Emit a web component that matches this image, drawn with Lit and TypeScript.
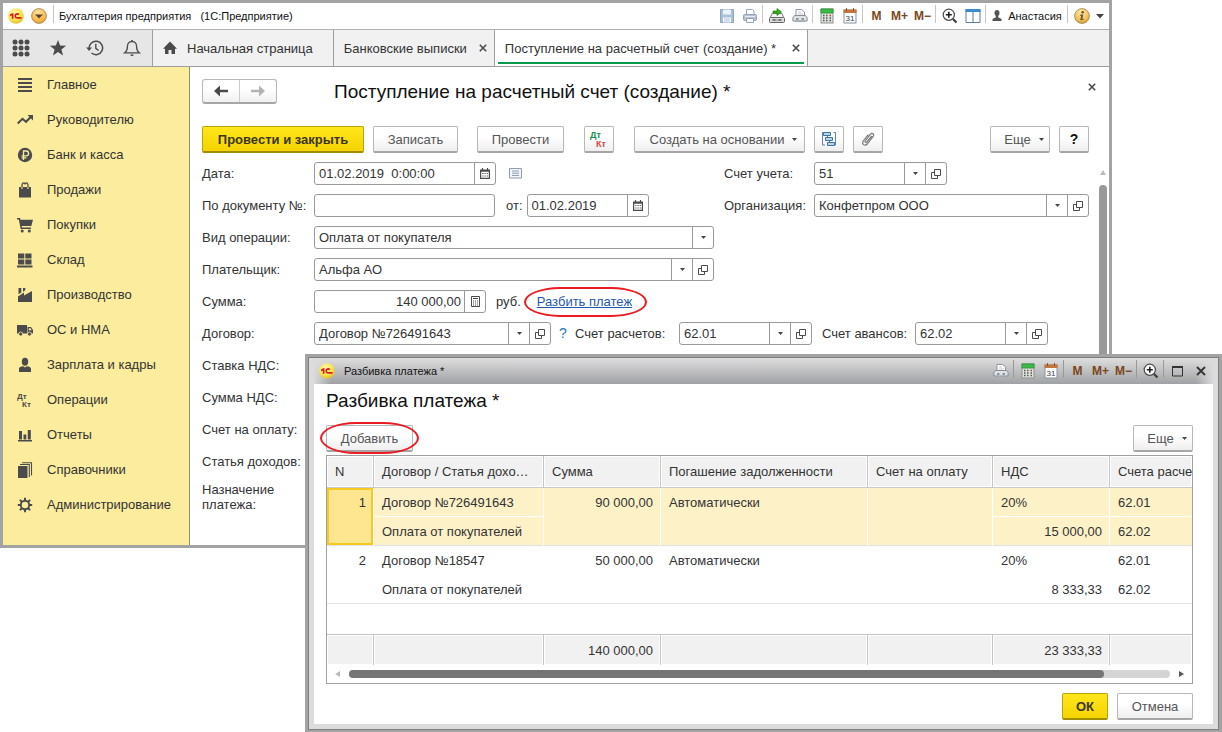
import { LitElement, html, css, svg, TemplateResult } from "lit";
import { customElement, state } from "lit/decorators.js";
import { classMap } from "lit/directives/class-map.js";

/* ---------- icons ---------- */

const icon = (w: number, h: number, body: unknown) => html`<svg
  class="icon"
  width=${w}
  height=${h}
  viewBox="0 0 ${w} ${h}"
  aria-hidden="true"
>${body}</svg>`;

const G = "#4b4b4b";

const icons = {
  logo: icon(16, 16, svg`
    <defs><radialGradient id="lg" cx="40%" cy="30%" r="75%"><stop offset="0" stop-color="#fff8a8"/><stop offset="0.6" stop-color="#fbe34f"/><stop offset="1" stop-color="#dcb82e"/></radialGradient></defs>
    <circle cx="8" cy="8" r="7.8" fill="url(#lg)"/>
    <path d="M2 6.600 4 5.200h1.500v5.600H3.800V7.400L2 8.200z" fill="#d8201c"/>
    <path d="M10.800 6.700A2 2 0 1 0 9 9.900h4.600" fill="none" stroke="#d8201c" stroke-width="1.700"/>`),
  menuBall: icon(16, 16, svg`
    <defs><radialGradient id="mb" cx="45%" cy="25%" r="80%"><stop offset="0" stop-color="#ffe3a0"/><stop offset="0.7" stop-color="#f7b548"/><stop offset="1" stop-color="#e39a2c"/></radialGradient></defs>
    <circle cx="8" cy="8" r="7.4" fill="url(#mb)" stroke="#a98750" stroke-width=".9"/>
    <path d="M4 6.500h8L8 10.500z" fill="#5b4526"/>`),
  save: icon(16, 16, svg`
    <path d="M1.500 1.500h13v13h-13z" fill="#a9c0dc" stroke="#8ba4c4"/>
    <path d="M4 1.500h8v5H4z" fill="#eef3f9"/><path d="M4 9.500h8v5H4z" fill="#fff"/><path d="M5 11h6M5 13h6" stroke="#a9c0dc"/>`),
  printer: icon(16, 16, svg`
    <path d="M4.500 1.500h6l1.500 1.500v4h-7.500z" fill="#fff" stroke="#98a7b8"/>
    <rect x="1.500" y="6.500" width="13" height="6" rx="1" fill="#b7c3d1" stroke="#93a2b4"/>
    <path d="M4.500 10.500h7v4h-7z" fill="#fff" stroke="#93a2b4"/><path d="M3 8.500h10" stroke="#e9eef3"/>`),
  printGo: icon(18, 16, svg`
    <path d="M2.500 9 4 5.500h10L15.500 9" fill="#f3f3f3" stroke="#7d7d7d"/>
    <rect x="1.500" y="9.500" width="15" height="5" rx="1" fill="#ddd" stroke="#666"/>
    <path d="M4.500 12h3M10.500 12h3" stroke="#555" stroke-width="1.600"/><path d="M7 12h4" stroke="#888"/>
    <path d="M5 3h4V.5L13.500 4 9 7.500V5H5z" fill="#35b21b" stroke="#1f7c10" stroke-width=".7"/>`),
  printDoc: icon(16, 16, svg`
    <path d="M4 8V1.500h5.500L12.500 4v4" fill="#fff" stroke="#8f949c"/><path d="M6 4h3M6 6h5" stroke="#c6cad0"/>
    <path d="M.9 9.500 2.500 7.500h11l1.600 2v3.500h-14.200z" fill="#dfe3e8" stroke="#878d96"/>
    <path d="M4 11h2.500M9.500 11H12" stroke="#757b84" stroke-width="1.600"/><path d="M3 13.500h10" stroke="#a2a8b0"/>`),
  calc: icon(14, 16, svg`
    <rect x="1" y="1" width="12" height="14" fill="#dfe2df" stroke="#8b918b"/>
    <path d="M1 1h12v4H1z" fill="#3fb84a" stroke="#2f9a3c"/>
    <path d="M3 7.500h1.500M6 7.500h1.500M3 10h1.500M6 10h1.500M3 12.500h1.500M6 12.500h1.500M9.500 10H11M9.500 12.500H11" stroke="#4d5a4d" stroke-width="1.500"/>
    <path d="M9.500 7.500H11" stroke="#c33" stroke-width="1.500"/>`),
  calendar: icon(14, 16, svg`
    <rect x="1" y="2" width="12" height="13" fill="#fdfdfd" stroke="#8693a3"/>
    <path d="M.5 1.500h13V5H.5z" fill="#c4763f"/><path d="M3.500 0v3M10.500 0v3" stroke="#8d5228"/>
    <text x="7" y="13" text-anchor="middle" font-size="8" font-family="Liberation Sans, Arial, sans-serif" fill="#38404a">31</text>`),
  zoom: icon(16, 16, svg`
    <circle cx="6.800" cy="6.800" r="5.600" fill="#fdfdfd" stroke="#4a4a4a" stroke-width="1.200"/>
    <path d="M3.800 6.800h6M6.800 3.800v6" stroke="#1f1f1f" stroke-width="1.600"/><path d="m11 11 3.500 3.500" stroke="#3c3c3c" stroke-width="2.200"/>`),
  panels: icon(16, 16, svg`
    <path d="M1 1.500h14v13H1z" fill="#fff" stroke="#5f7d9c"/><path d="M.5 1h15v3H.5z" fill="#3c8ad0"/><path d="M8 4v10.500" stroke="#5f7d9c"/>`),
  user: icon(10, 12, svg`<ellipse cx="5" cy="3" rx="2.500" ry="3" fill="#555"/><path d="M3.800 5h2.400v2.200L9.500 9v2h-9V9l3.300-1.800z" fill="#555"/>`),
  info: icon(16, 16, svg`
    <defs><radialGradient id="in" cx="45%" cy="25%" r="80%"><stop offset="0" stop-color="#ffe9a6"/><stop offset="0.700" stop-color="#efbd4c"/><stop offset="1" stop-color="#cf9630"/></radialGradient></defs>
    <circle cx="8" cy="8" r="7.400" fill="url(#in)" stroke="#a58a55" stroke-width=".9"/>
    <circle cx="8.600" cy="4.200" r="1.300" fill="#69503a"/><path d="M6.300 6.500h3L8.300 11l1.500-.4-.3 1.200-3.300.5 1-4.600-1.200.1z" fill="#69503a"/>`),
  caretBig: icon(8, 5, svg`<path d="M0 0h8L4 4.500z" fill="#444"/>`),
  caret: icon(5, 3, svg`<path d="M0 0h5L2.500 3z" fill="#444"/>`),
  grid: icon(18, 18, svg`${[3, 9, 15].map((y) => [3, 9, 15].map((x) => svg`<circle cx=${x} cy=${y} r="2.500" fill=${G}/>`))}`),
  star: icon(18, 18, svg`<path d="m9 1 2.100 5.500 6 .3-4.700 3.700 1.700 5.900L9 13l-5.100 3.400 1.700-5.900L.9 6.800l6-.3z" fill=${G}/>`),
  history: icon(18, 18, svg`<path d="M3.200 9.500A6.700 6.700 0 1 1 5.500 14" fill="none" stroke=${G} stroke-width="1.500"/><path d="M.2 8.500h5.800L3.100 12z" fill=${G}/><path d="M9.800 4.800V9.300l2.800 2.200" fill="none" stroke=${G} stroke-width="1.400"/>`),
  bell: icon(18, 18, svg`<path d="M1.800 13.800c2-1.500 2.600-3 2.600-6C4.400 4.500 6.500 2.700 9 2.700s4.600 1.800 4.600 5.100c0 3 .6 4.500 2.600 6z" fill="none" stroke=${G} stroke-width="1.300"/><path d="M7.300 15.500h3.400c-.2 1-.8 1.500-1.700 1.500s-1.500-.5-1.700-1.500z" fill=${G}/><path d="M8.200 1h1.600v2H8.200z" fill=${G}/>`),
  home: icon(14, 14, svg`<path d="M7 .5 0 7.800h2V13h3.500V9h3v4H12V7.800h2z" fill=${G}/>`),
  cross: icon(8, 8, svg`<path d="m.8.8 6.400 6.400M7.200.8.8 7.200" stroke=${G} stroke-width="1.600"/>`),
  crossBig: icon(10, 10, svg`<path d="m1 1 8 8M9 1 1 9" stroke="#333" stroke-width="1.800"/>`),
  maximize: icon(11, 11, svg`<path d="M.5 1h10v9H.5z" fill="none" stroke="#333"/><path d="M0 1h11" stroke="#333" stroke-width="2"/>`),
  back: icon(14, 12, svg`<path d="M0 6 6 .5V4.700h8v2.600H6v4.200z" fill=${G}/>`),
  forward: icon(14, 12, svg`<path d="M14 6 8 .5V4.700H0v2.600h8v4.200z" fill="#b3b3b3"/>`),
  structure: icon(16, 16, svg`
    <path d="M4 1.500H1.500v12.500H4M12.500 1.500h2V14H13" fill="none" stroke="#5b84a8"/>
    <path d="M2.500 1.500h7v3h-7zM4.500 6.500h7v3h-7zM6.500 11.500h7v3h-7z" fill="#b9d3e6" stroke="#3f759f"/><path d="M6.500 4.500v2M8.500 9.500v2" stroke="#3f759f"/>`),
  clip: icon(14, 16, svg`<path d="m10.800 5-5 6.200c-.8 1-2.300-.1-1.500-1.200l5.200-6.800c1.500-1.900 4.200.1 2.700 2.100L6.300 13c-2.300 2.800-6.200-.1-4-3l5-6.400" fill="none" stroke="#777" stroke-width="1.200"/>`),
  dateBox: icon(10, 11, svg`<path d="M.6 2.500h8.800v7.900H.6z" fill="none" stroke=${G} stroke-width="1.200"/><path d="M0 1.500h10v2.300H0z" fill=${G}/><path d="M2.500 0v2M7.500 0v2" stroke=${G} stroke-width="1.200"/><path d="M2.300 5.500h1.200M4.500 5.500h1.200M6.700 5.500h1.200M2.300 8h1.200M4.500 8h1.200M6.700 8h1.200" stroke=${G} stroke-width="1.200"/>`),
  calcBox: icon(9, 11, svg`<path d="M.5.5h8v10h-8z" fill="none" stroke=${G}/><path d="M2 2.500h5M2 5h1M4 5h1M6 5h1M2 7h1M4 7h1M6 7h1M2 9h1M4 9h1M6 9h1" stroke=${G}/>`),
  open: icon(10, 10, svg`<path d="M3.500.5h6v6h-6z" fill="none" stroke=${G}/><path d="M3.500 3.500h-3v6h6v-3" fill="none" stroke=${G}/>`),
  note: icon(14, 11, svg`<path d="M.5.5h12v9.500H.5z" fill="#f3f6f9" stroke="#8c9cb3"/><path d="M3 3h7M3 5.200h7M3 7.500h7" stroke="#8c9cb3"/>`),
  arrowL: icon(5, 6, svg`<path d="M5 0v6L0 3z" fill="#bbb"/>`),
  arrowR: icon(5, 6, svg`<path d="M0 0v6l5-3z" fill="#555"/>`),
  arrowU: icon(6, 5, svg`<path d="M0 5h6L3 0z" fill="#bbb"/>`),
};

const nav: { label: string; icon: TemplateResult }[] = [
  { label: "Главное", icon: icon(16, 16, svg`<path d="M1 2h14M1 6h14M1 10h14M1 14h14" stroke=${G} stroke-width="2"/>`) },
  { label: "Руководителю", icon: icon(16, 16, svg`<path d="m.7 11.500 4.800-4.700 3.500 3 4.500-4.500" fill="none" stroke=${G} stroke-width="2"/><path d="M10.500 3H16v5.500z" fill=${G}/>`) },
  { label: "Банк и касса", icon: icon(16, 16, svg`<circle cx="8" cy="8" r="7.200" fill=${G}/><path d="M6.500 13V4h2.700a2.300 2.300 0 0 1 0 4.800H4.600M4.600 10.900h4.800" fill="none" stroke="#fbec9e" stroke-width="1.300"/>`) },
  { label: "Продажи", icon: icon(16, 16, svg`<path d="M2 5h12v10.500H2z" fill=${G}/><path d="M5 7V3.500C5 .5 8 .5 8 3M8 3c0-2.500 3-2.500 3 .5V7" fill="none" stroke="#fbec9e" stroke-width="1"/><path d="M5 5V3C5.200.2 8 .2 8 2.500 8 .2 10.800.2 11 3v2" fill="none" stroke=${G} stroke-width="1.300"/>`) },
  { label: "Покупки", icon: icon(16, 16, svg`<path d="M0 1h3l.6 1.800H16L14.300 9H4.600l.4 1.500h9V12H3.700L1.800 2.500H0z" fill=${G}/><circle cx="5.200" cy="14" r="1.500" fill=${G}/><circle cx="12.300" cy="14" r="1.500" fill=${G}/>`) },
  { label: "Склад", icon: icon(16, 16, svg`<path d="M1 1.500h6.300v5H1zM8.300 1.500h6.200v5H8.300zM1 7.500h6.300v5H1zM8.300 7.500h6.200v5H8.300zM0 13.500h15.500v2H0z" fill=${G}/>`) },
  { label: "Производство", icon: icon(16, 16, svg`<path d="M1 15V9.500l6-4v3l8-4.500V15z" fill=${G}/><path d="M1.500 1h2.800v4.500L1.500 7.200zM6 1h2.500L8 3.500 6 4.700z" fill=${G}/>`) },
  { label: "ОС и НМА", icon: icon(16, 16, svg`<path d="M0 3h10v8.500H0zM10.500 5H14l2 3v3.500h-5.500z" fill=${G}/><path d="M11.800 6.200h1.700l1.200 2h-2.900z" fill="#fbec9e"/><circle cx="3.700" cy="12" r="2" fill=${G} stroke="#fbec9e" stroke-width=".8"/><circle cx="12.500" cy="12" r="2" fill=${G} stroke="#fbec9e" stroke-width=".8"/>`) },
  { label: "Зарплата и кадры", icon: icon(16, 16, svg`<ellipse cx="8" cy="4.700" rx="3.200" ry="4" fill=${G}/><path d="M2 15v-3.200C2 10 5 9.300 6.300 9.300L8 10.500l1.700-1.200c1.300 0 4.300.7 4.300 2.500V15z" fill=${G}/>`) },
  { label: "Операции", icon: icon(16, 16, svg`<g font-family="Liberation Sans, Arial, sans-serif" font-weight="700" font-size="8" fill=${G}><text x="0" y="7">Дт</text><text x="5" y="15">Кт</text></g>`) },
  { label: "Отчеты", icon: icon(16, 16, svg`<path d="M2 4h3v8.500H2zM6.500 7.500h2.800v5H6.500zM10.800 3h3v9.500h-3zM1 13h14v1.500H1z" fill=${G}/>`) },
  { label: "Справочники", icon: icon(16, 16, svg`<path d="M1 4h9.500v12H1z" fill=${G}/><path d="M3 2.500h9.300V15M5 .7h9.500v12.800" fill="none" stroke=${G} stroke-width="1.100"/>`) },
  { label: "Администрирование", icon: icon(16, 16, svg`<circle cx="8" cy="8" r="4.200" fill="none" stroke=${G} stroke-width="1.900"/>${[0, 45, 90, 135, 180, 225, 270, 315].map((a) => svg`<path d="M7 .8h2v3H7z" fill=${G} transform="rotate(${a} 8 8)"/>`)}`) },
];

/* ---------- shared styles ---------- */

const shared = css`
  * { box-sizing: border-box; }
  button, input, select {
    font: inherit;
    color: inherit;
    margin: 0;
    padding: 0;
    border: 0;
    background: none;
    border-radius: 0;
    outline-offset: -1px;
  }
  button { cursor: pointer; }
  .icon { display: block; flex: none; }
  .caption {
    display: flex;
    align-items: center;
    font-size: 11px;
    line-height: 16px;
    color: #111;
  }
  .caption .tools { display: flex; align-items: center; margin-left: auto; }
  .tool {
    width: 23px;
    height: 24px;
    display: flex;
    align-items: center;
    justify-content: center;
    white-space: nowrap;
  }
  .tool.mem { font: bold 12px/16px "Liberation Sans", Arial, sans-serif; color: #7a4620; }
  .sep { width: 1px; height: 18px; margin: 0 2px 4px 1px; background: #c6c6c6; }
  h1 { margin: 0; font-size: 19px; line-height: 24px; font-weight: 400; color: #111; }
  .btn {
    height: 27px;
    display: inline-flex;
    align-items: center;
    justify-content: center;
    gap: 8px;
    border: 1px solid #b7b7b7;
    border-bottom: 2px solid #a6a6a6;
    border-radius: 2px;
    background: linear-gradient(#fff 40%, #eee);
    color: #555;
    white-space: nowrap;
    flex: none;
  }
  .btn.primary {
    background: linear-gradient(#ffe61a, #f5d400);
    border-color: #b9a20c;
    border-bottom-color: #a18c06;
    color: #3b3520;
    font-weight: 700;
  }
  .ringed { position: relative; display: inline-flex; }
  .ring {
    position: absolute;
    border: 2px solid #ea1b22;
    border-radius: 36px / 50%;
    pointer-events: none;
  }
`;

const separator = html`<span class="sep"></span>`;
const tool = (label: string, body: unknown, mem = false) =>
  html`<button class=${classMap({ tool: true, mem })} title=${label} aria-label=${label}>${body}</button>`;

const calcTools = html`
  ${separator}
  ${tool("Калькулятор", icons.calc)} ${tool("Календарь", icons.calendar)}
  ${separator}
  ${tool("Память", "M", true)} ${tool("Прибавить к памяти", "M+", true)} ${tool("Вычесть из памяти", "M−", true)}
  ${separator}
  ${tool("Масштаб", icons.zoom)}
`;

/* ---------- split payment dialog ---------- */

interface SplitRow {
  contract: string;
  income: string;
  sum: string;
  debt: string;
  rate: string;
  vat: string;
  settlement: string;
  advance: string;
}

@customElement("split-dialog")
export class SplitDialog extends LitElement {
  @state() private selected = 0;

  private rows: SplitRow[] = [
    { contract: "Договор №726491643", income: "Оплата от покупателей", sum: "90 000,00", debt: "Автоматически", rate: "20%", vat: "15 000,00", settlement: "62.01", advance: "62.02" },
    { contract: "Договор №18547", income: "Оплата от покупателей", sum: "50 000,00", debt: "Автоматически", rate: "20%", vat: "8 333,33", settlement: "62.01", advance: "62.02" },
  ];

  static styles = [
    shared,
    css`
      :host { display: block; }
      .frame { border: 3px solid #a3a3a3; }
      .inner { border: 1px solid #7f7f7f; background: #dcdcdc; padding: 0 5px 5px; }
      .caption {
        height: 26px;
        margin: 0 -5px;
        padding: 0 6px 0 10px;
        background:
          linear-gradient(to right, #dcdcdc 4px, #dcdcdc00 22px, #dcdcdc00 calc(100% - 22px), #dcdcdc calc(100% - 4px)),
          linear-gradient(#dedede, #a0a1a4);
      }
      .caption .name { margin-left: 9px; }
      .sep { background: #98999b; }
      .body { background: #fff; padding: 5px 20px 4px 12px; }
      .commands { display: flex; justify-content: space-between; margin: 12px 0 3px; }
      .add { width: 87px; }
      .more { width: 60px; padding-left: 8px; }
      .add-ring { inset: -3px -6px -2px -6px; }
      .grid { border: 1px solid #a0a0a0; overflow: hidden; }
      table { width: 100%; table-layout: fixed; border-collapse: separate; border-spacing: 0; color: #333; }
      .c-n { width: 47px; }
      .c-contract { width: 170px; }
      .c-sum, .c-vat { width: 117px; }
      .c-debt { width: 207px; }
      .c-invoice { width: 125px; }
      th, td {
        padding: 2px 8px 0;
        height: 29px;
        font-weight: 400;
        text-align: left;
        vertical-align: top;
        line-height: 26px;
        white-space: nowrap;
        overflow: hidden;
        border: 0 solid transparent;
        border-right-width: 1px;
      }
      th:last-child, td.last { padding-right: 0; border-right-width: 0; }
      .trim { text-overflow: ellipsis; }
      thead th, tfoot td {
        line-height: 28px;
        background: #f1f1f1;
        border-right-color: #c4c4c4;
        box-shadow: inset 0 0 0 1px #fff;
      }
      thead th { height: 32px; border-bottom: 1px solid #c9c9c9; }
      tfoot td { height: 31px; border-top: 1px solid #c4c4c4; }
      .num { text-align: right; padding-right: 7px; }
      tbody td.end { border-bottom: 1px solid #e2e2e2; }
      tbody.selected td { background: #fdf1c8; border-right-color: #fff; }
      tbody.selected td.half { border-bottom: 1px solid #fff; }
      tbody.selected td.current { background: #fee690; box-shadow: inset 0 0 0 2px #f9c823; }
      .blank td { height: 30px; border: 0; }
      .scroll { display: flex; align-items: center; gap: 9px; height: 18px; padding: 0 8px; }
      .track { flex: 1; height: 8px; border-radius: 4px; background: #d4d4d4; }
      .thumb { width: 92%; height: 8px; border-radius: 4px; background: #757575; }
      .answers { display: flex; justify-content: flex-end; gap: 9px; margin-top: 9px; }
      .ok { width: 46px; }
      .cancel { width: 76px; }
    `,
  ];

  private renderRow(r: SplitRow, i: number) {
    return html`
      <tbody class=${classMap({ selected: i === this.selected })} @click=${() => (this.selected = i)}>
        <tr>
          <td class="num end current" rowspan="2">${i + 1}</td>
          <td class="half">${r.contract}</td>
          <td class="num end" rowspan="2">${r.sum}</td>
          <td class="end" rowspan="2">${r.debt}</td>
          <td class="end" rowspan="2"></td>
          <td class="half">${r.rate}</td>
          <td class="half last">${r.settlement}</td>
        </tr>
        <tr>
          <td class="end">${r.income}</td>
          <td class="num end">${r.vat}</td>
          <td class="end last">${r.advance}</td>
        </tr>
      </tbody>
    `;
  }

  render() {
    return html`
      <section class="frame" role="dialog" aria-labelledby="title">
        <div class="inner">
          <div class="caption">
            ${icons.logo}<span class="name">Разбивка платежа *</span>
            <div class="tools">
              ${tool("Печать", icons.printDoc)} ${calcTools} ${separator}
              ${tool("Развернуть", icons.maximize)} ${tool("Закрыть", icons.crossBig)}
            </div>
          </div>
          <div class="body">
            <h1 id="title">Разбивка платежа *</h1>
            <div class="commands">
              <span class="ringed"><button class="btn add">Добавить</button><span class="ring add-ring"></span></span>
              <button class="btn more">Еще ${icons.caret}</button>
            </div>
            <div class="grid">
              <table>
                <colgroup>
                  <col class="c-n" /><col class="c-contract" /><col class="c-sum" /><col class="c-debt" />
                  <col class="c-invoice" /><col class="c-vat" /><col />
                </colgroup>
                <thead>
                  <tr>
                    <th>N</th>
                    <th class="trim">Договор / Статья доходов</th>
                    <th>Сумма</th>
                    <th>Погашение задолженности</th>
                    <th>Счет на оплату</th>
                    <th>НДС</th>
                    <th>Счета расче</th>
                  </tr>
                </thead>
                ${this.rows.map((r, i) => this.renderRow(r, i))}
                <tbody class="blank"><tr><td colspan="7"></td></tr></tbody>
                <tfoot>
                  <tr>
                    <td></td><td></td><td class="num">140 000,00</td><td></td><td></td>
                    <td class="num">23 333,33</td><td class="last"></td>
                  </tr>
                </tfoot>
              </table>
              <div class="scroll">${icons.arrowL}<div class="track"><div class="thumb"></div></div>${icons.arrowR}</div>
            </div>
            <div class="answers">
              <button class="btn primary ok">ОК</button>
              <button class="btn cancel">Отмена</button>
            </div>
          </div>
        </div>
      </section>
    `;
  }
}

/* ---------- application ---------- */

type FieldButton = "pick" | "open" | "date" | "calc";

const fieldButtons: Record<FieldButton, { label: string; icon: TemplateResult }> = {
  pick: { label: "Выбрать", icon: icons.caret },
  open: { label: "Открыть", icon: icons.open },
  date: { label: "Выбрать дату", icon: icons.dateBox },
  calc: { label: "Калькулятор", icon: icons.calcBox },
};

const field = (id: string, value: string, size: string, buttons: FieldButton[] = []) => html`
  <span class="field ${size}">
    <input id=${id} type="text" .value=${value} />
    ${buttons.map((b) => html`<button aria-label=${fieldButtons[b].label}>${fieldButtons[b].icon}</button>`)}
  </span>
`;

@customElement("app-root")
export class AppRoot extends LitElement {
  static styles = [
    shared,
    css`
      :host {
        display: block;
        position: relative;
        min-height: 100vh;
        background: #fff;
        color: #333;
        font-family: "Liberation Sans", Arial, sans-serif;
        font-size: 13px;
        line-height: 15px;
      }
      .window { margin-right: 110px; border: 3px solid #a3a3a3; background: #fff; }
      .dialog { position: absolute; top: 354px; left: 305px; right: 0; }

      .main-caption { height: 27px; padding: 0 2px 0 5px; border-bottom: 1px solid #b0b0b0; }
      .main-caption .start { display: flex; align-items: center; gap: 7px; }
      .main-caption .start .sep { margin: 0 -2px 4px -1px; }
      .main-caption .tool.wide { width: 78px; gap: 6px; }
      .main-caption .tool.small { width: 14px; }

      .tabs { display: flex; height: 37px; background: #f1f1f1; border-bottom: 1px solid #9d9d9d; }
      .quick { display: flex; width: 150px; padding-right: 2px; background: #e6e6e6; border-right: 1px solid #9d9d9d; }
      .quick button { flex: 1; display: flex; align-items: center; justify-content: center; }
      .tab {
        position: relative;
        display: flex;
        align-items: center;
        gap: 12px;
        padding: 0 7px 0 10px;
        border-right: 1px solid #9d9d9d;
        color: #333;
        white-space: nowrap;
      }
      .tab.home { padding-right: 20px; gap: 10px; }
      .tab.active { background: #fff; gap: 16px; }
      .tab.active::after { content: ""; position: absolute; left: 3px; right: 3px; bottom: 2px; height: 2px; background: #0a9a4b; }

      .work { display: flex; }
      .side { flex: none; width: 187px; padding-bottom: 23px; background: #fbec9e; border-right: 1px solid #8f8a6a; }
      .side a { display: flex; align-items: center; gap: 14px; height: 35px; padding-left: 14px; color: #333; text-decoration: none; white-space: nowrap; }

      .page { flex: 1; min-width: 0; padding: 12px 2px 0 12px; }
      .head { display: flex; align-items: center; height: 25px; padding-right: 9px; }
      .arrows { display: flex; width: 75px; height: 25px; margin-right: 57px; border: 1px solid #b7b7b7; border-bottom: 2px solid #a6a6a6; border-radius: 3px; background: linear-gradient(#fff 40%, #f0f0f0); }
      .arrows button { flex: 1; display: flex; align-items: center; justify-content: center; }
      .arrows button + button { border-left: 1px solid #cdcdcd; }
      .head .close { margin-left: auto; padding: 2px; align-self: flex-start; margin-top: 2px; }

      .commands { display: flex; gap: 9px; margin: 22px 18px 9px 0; }
      .w162 { width: 162px; }
      .w85 { width: 85px; margin-right: 10px; }
      .w87 { width: 87px; margin-right: 11px; }
      .w171 { width: 171px; padding-left: 8px; }
      .w30 { width: 30px; }
      .accent { margin-right: 11px; }
      .w60 { width: 60px; padding-left: 8px; margin-left: auto; }
      .help { color: #111; font-weight: 700; font-size: 14px; }

      .form-area { display: flex; }
      .form { flex: 1; min-width: 0; display: flex; flex-direction: column; gap: 9px; margin-right: 9px; }
      .row { display: flex; align-items: center; min-height: 23px; white-space: nowrap; }
      .row > .lead { width: 112px; flex: none; }
      .left { display: flex; align-items: center; width: 522px; flex: none; }
      .left > .lead { width: 112px; flex: none; }
      .right-label { width: 90px; flex: none; }
      .multi { align-items: flex-start; }
      .multi > .lead { white-space: normal; }
      .field { display: inline-flex; height: 23px; border: 1px solid #999; border-radius: 3px; background: #fff; overflow: hidden; flex: none; }
      .field input, .field select { flex: 1; min-width: 0; width: 0; padding: 0 4px; color: #333; appearance: none; }
      .field button, .field .drop { width: 21px; flex: none; display: flex; align-items: center; justify-content: center; border-left: 1px solid #999; }
      .field .drop { pointer-events: none; }
      .s-date { width: 182px; }
      .s-doc { width: 181px; }
      .s-day { width: 122px; }
      .s-long { width: 400px; }
      .s-sum { width: 172px; }
      .s-sum input { text-align: right; padding-right: 3px; }
      .s-contract { width: 237px; }
      .s-acc { width: 133px; }
      .s-fill { flex: 1; }
      .note { margin-left: 13px; }
      .from { margin: 0 4px 0 11px; }
      .cur { margin: 0 16px 0 10px; }
      .link { color: #2359b0; text-decoration: underline; }
      .link-ring { inset: -7px -15px -8px -13px; }
      .q { width: 24px; text-align: center; color: #1a7ab8; font-size: 14px; }
      .acc-label { width: 104px; }
      .adv-label { width: 93px; margin-left: 10px; }

      .bar { flex: none; width: 10px; padding-top: 8px; display: flex; flex-direction: column; align-items: center; gap: 10px; margin-right: -1px; }
      .bar .thumb { flex: 1; width: 8px; border-radius: 4px; background: #999; }
    `,
  ];

  render() {
    return html`
      <main class="window">
        <header class="caption main-caption">
          <div class="start">
            ${icons.logo}
            <button aria-label="Главное меню">${icons.menuBall}</button>
            ${separator}
            <span>Бухгалтерия предприятия &nbsp; (1С:Предприятие)</span>
          </div>
          <div class="tools">
            ${tool("Сохранить", icons.save)} ${tool("Печать", icons.printer)} ${separator}
            ${tool("Отправить на печать", icons.printGo)} ${tool("Предварительный просмотр", icons.printDoc)}
            ${calcTools} ${tool("Панели", icons.panels)} ${separator}
            <button class="tool wide">${icons.user}<span>Анастасия</span></button>
            ${separator} ${tool("Справка", icons.info)}
            <button class="tool small" aria-label="Еще">${icons.caretBig}</button>
          </div>
        </header>

        <div class="tabs">
          <div class="quick">
            <button aria-label="Разделы">${icons.grid}</button>
            <button aria-label="Избранное">${icons.star}</button>
            <button aria-label="История">${icons.history}</button>
            <button aria-label="Оповещения">${icons.bell}</button>
          </div>
          <div class="tab home">${icons.home}<span>Начальная страница</span></div>
          <div class="tab"><span>Банковские выписки</span><button aria-label="Закрыть вкладку">${icons.cross}</button></div>
          <div class="tab active"><span>Поступление на расчетный счет (создание) *</span><button aria-label="Закрыть вкладку">${icons.cross}</button></div>
        </div>

        <div class="work">
          <nav class="side">${nav.map((n) => html`<a href="#">${n.icon}<span>${n.label}</span></a>`)}</nav>

          <section class="page">
            <div class="head">
              <div class="arrows">
                <button aria-label="Назад">${icons.back}</button>
                <button aria-label="Вперед">${icons.forward}</button>
              </div>
              <h1>Поступление на расчетный счет (создание) *</h1>
              <button class="close" aria-label="Закрыть">${icons.cross}</button>
            </div>

            <div class="commands">
              <button class="btn primary w162">Провести и закрыть</button>
              <button class="btn w85">Записать</button>
              <button class="btn w87">Провести</button>
              <button class="btn w30 accent" aria-label="Проводки">
                ${icon(18, 18, svg`<g font-family="Liberation Sans, Arial, sans-serif" font-weight="700" font-size="9"><text x="0" y="8" fill="#12914c">Дт</text><text x="6" y="17" fill="#dc4545">Кт</text></g>`)}
              </button>
              <button class="btn w171">Создать на основании ${icons.caret}</button>
              <button class="btn w30" aria-label="Структура подчиненности">${icons.structure}</button>
              <button class="btn w30" aria-label="Присоединенные файлы">${icons.clip}</button>
              <button class="btn w60">Еще ${icons.caret}</button>
              <button class="btn w30 help">?</button>
            </div>

            <div class="form-area">
              <div class="form">
                <div class="row">
                  <div class="left">
                    <label class="lead" for="date">Дата:</label>
                    ${field("date", "01.02.2019  0:00:00", "s-date", ["date"])}
                    <span class="note">${icons.note}</span>
                  </div>
                  <label class="right-label" for="account">Счет учета:</label>
                  ${field("account", "51", "s-acc", ["pick", "open"])}
                </div>
                <div class="row">
                  <div class="left">
                    <label class="lead" for="doc">По документу №:</label>
                    ${field("doc", "", "s-doc")}
                    <label class="from" for="day">от:</label>
                    ${field("day", "01.02.2019", "s-day", ["date"])}
                  </div>
                  <label class="right-label" for="org">Организация:</label>
                  ${field("org", "Конфетпром ООО", "s-fill", ["pick", "open"])}
                </div>
                <div class="row">
                  <label class="lead" for="kind">Вид операции:</label>
                  <span class="field s-long">
                    <select id="kind"><option>Оплата от покупателя</option></select>
                    <span class="drop">${icons.caret}</span>
                  </span>
                </div>
                <div class="row">
                  <label class="lead" for="payer">Плательщик:</label>
                  ${field("payer", "Альфа АО", "s-long", ["pick", "open"])}
                </div>
                <div class="row">
                  <label class="lead" for="sum">Сумма:</label>
                  ${field("sum", "140 000,00", "s-sum", ["calc"])}
                  <span class="cur">руб.</span>
                  <span class="ringed"><a class="link" href="#">Разбить платеж</a><span class="ring link-ring"></span></span>
                </div>
                <div class="row">
                  <label class="lead" for="contract">Договор:</label>
                  ${field("contract", "Договор №726491643", "s-contract", ["pick", "open"])}
                  <button class="q" aria-label="Подсказка">?</button>
                  <label class="acc-label" for="settlement">Счет расчетов:</label>
                  ${field("settlement", "62.01", "s-acc", ["pick", "open"])}
                  <label class="adv-label" for="advance">Счет авансов:</label>
                  ${field("advance", "62.02", "s-acc", ["pick", "open"])}
                </div>
                ${["Ставка НДС:", "Сумма НДС:", "Счет на оплату:", "Статья доходов:"].map(
                  (l) => html`<div class="row"><span class="lead">${l}</span></div>`
                )}
                <div class="row multi"><span class="lead">Назначение платежа:</span></div>
              </div>
              <div class="bar">${icons.arrowU}<div class="thumb"></div></div>
            </div>
          </section>
        </div>
      </main>

      <split-dialog class="dialog"></split-dialog>
    `;
  }
}
